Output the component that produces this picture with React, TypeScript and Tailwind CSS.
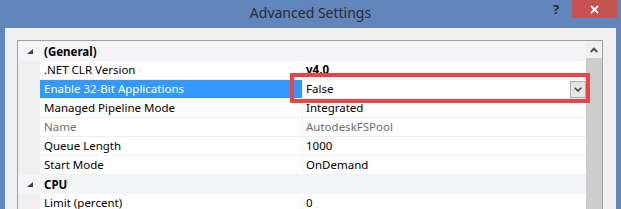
const font = { fontFamily: '"Noto Sans", "Open Sans", sans-serif' };

type Row =
  | { kind: "category"; label: string }
  | {
      kind: "prop";
      name: string;
      value: string;
      bold?: boolean;
      disabled?: boolean;
      selected?: boolean;
    };

const rows: Row[] = [
  { kind: "category", label: "(General)" },
  { kind: "prop", name: ".NET CLR Version", value: "v4.0", bold: true },
  { kind: "prop", name: "Enable 32-Bit Applications", value: "False", selected: true },
  { kind: "prop", name: "Managed Pipeline Mode", value: "Integrated" },
  { kind: "prop", name: "Name", value: "AutodeskFSPool", disabled: true },
  { kind: "prop", name: "Queue Length", value: "1000" },
  { kind: "prop", name: "Start Mode", value: "OnDemand" },
  { kind: "category", label: "CPU" },
  { kind: "prop", name: "Limit (percent)", value: "0" },
];

function Expander() {
  return (
    <svg width="6" height="5" viewBox="0 0 6 5" className="ml-[9px] mt-[-1px]">
      <polygon points="6,0 6,5 0,5" fill="#404040" />
    </svg>
  );
}

function ComboButton() {
  return (
    <div className="flex h-[17px] w-[16px] items-center justify-center border border-[#ADADAD] bg-[#E5E5E5]">
      <svg width="8" height="5" viewBox="0 0 8 5">
        <path d="M0.8 0.8 L4 4 L7.2 0.8" fill="none" stroke="#404040" strokeWidth="1.6" />
      </svg>
    </div>
  );
}

function GridRow({ row }: { row: Row }) {
  if (row.kind === "category") {
    return (
      <div className="flex h-[19px] shrink-0 items-center bg-[#F3F5F9]">
        <div className="flex w-[22px] items-center">
          <Expander />
        </div>
        <span className="pl-[4px] text-[11.5px] font-bold text-black">{row.label}</span>
      </div>
    );
  }
  return (
    <div className="flex h-[19px] shrink-0">
      <div className="w-[22px] bg-[#F0F0F0]" />
      <div className="flex flex-1 border-b border-[#F0F0F0]">
        <div
          className={
            "flex w-[263px] items-center border-r border-[#F0F0F0] pl-[4px] text-[11.5px] " +
            (row.selected
              ? "bg-[#3399FF] text-white"
              : row.disabled
                ? "bg-white text-[#6D6D6D]"
                : "bg-white text-black")
          }
        >
          {row.name}
        </div>
        <div
          className={
            "flex flex-1 items-center justify-between bg-white pl-[3px] text-[11.5px] " +
            (row.disabled ? "text-[#6D6D6D]" : "text-black") +
            (row.bold ? " font-bold" : "")
          }
        >
          <span>{row.value}</span>
          {row.selected && <ComboButton />}
        </div>
      </div>
    </div>
  );
}

export default function App() {
  return (
    <div
      className="relative flex h-[209px] w-[621px] flex-col overflow-hidden bg-[#6285BB]"
      style={font}
    >
      <div className="relative flex h-[28px] shrink-0 items-start justify-center pt-[3px]">
        <span className="text-[14px] leading-[20px] text-[#2B2B2B]">Advanced Settings</span>
        <span className="absolute left-[553px] top-[1px] text-[13px] font-bold leading-[16px] text-[#2B2B2B]">
          ?
        </span>
        <div className="absolute right-[4px] top-0 flex h-[18px] w-[45px] items-center justify-center bg-[#C75050]">
          <svg width="9" height="9" viewBox="0 0 9 9">
            <path d="M1 1 L8 8 M8 1 L1 8" stroke="white" strokeWidth="1.8" />
          </svg>
        </div>
      </div>

      <div className="mx-[5px] min-h-0 flex-1 bg-[#F0F0F0] pl-[12px] pr-[13px] pt-[12px]">
        <div className="flex h-full overflow-hidden border-l border-r border-t border-[#A0A0A0] bg-[#F0F0F0]">
          <div className="flex flex-1 flex-col pt-px">
            {rows.map((r, i) => (
              <GridRow key={i} row={r} />
            ))}
          </div>
          <div className="flex w-[16px] flex-col">
            <div className="flex h-[17px] items-center justify-center bg-[#F0F0F0]">
              <svg width="8" height="6" viewBox="0 0 8 6">
                <path d="M0.8 5 L4 1.6 L7.2 5" fill="none" stroke="#505050" strokeWidth="2" />
              </svg>
            </div>
            <div className="flex-1 bg-[#CDCDCD]" />
          </div>
        </div>
      </div>

      <div className="absolute left-[290px] top-[73px] h-[30px] w-[300px] border-4 border-[#E84646]" />
    </div>
  );
}
